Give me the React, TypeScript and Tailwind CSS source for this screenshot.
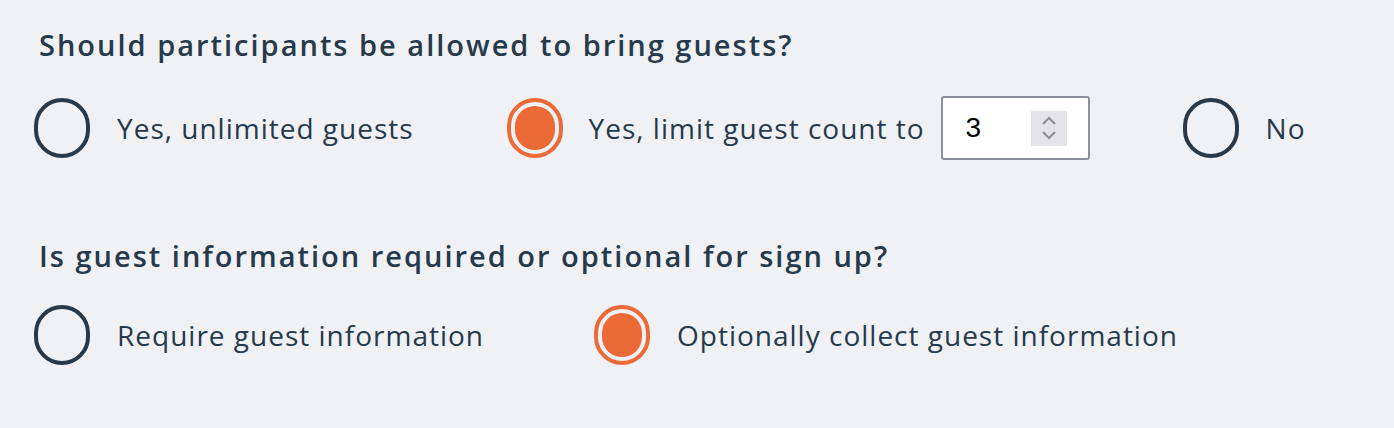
import { useState } from "react";

type Option = { value: string; label: string };

function Radio({ checked, onClick }: { checked: boolean; onClick: () => void }) {
  return (
    <button
      type="button"
      onClick={onClick}
      className={`flex h-[60px] w-[56px] shrink-0 items-center justify-center rounded-full border-4 ${
        checked ? "border-[#ec6a35]" : "border-[#263a4b]"
      }`}
    >
      {checked && <span className="block h-[44px] w-[40px] rounded-full bg-[#ec6a35]" />}
    </button>
  );
}

export default function App() {
  const [guests, setGuests] = useState("limit");
  const [count, setCount] = useState("3");
  const [info, setInfo] = useState("optional");

  const infoOptions: Option[] = [
    { value: "require", label: "Require guest information" },
    { value: "optional", label: "Optionally collect guest information" },
  ];

  return (
    <div
      className="min-h-[428px] w-full bg-[#f0f1f5] px-[34px] pt-[26px] text-[#263a4b]"
      style={{ fontFamily: '"Open Sans", "Noto Sans", sans-serif' }}
    >
      <h2 className="pl-[5px] text-[29px] font-semibold leading-[38px] tracking-[2px]">
        Should participants be allowed to bring guests?
      </h2>

      <div className="mt-[32px] flex items-center gap-[93px]">
        <label className="flex items-center gap-[27px]">
          <Radio checked={guests === "unlimited"} onClick={() => setGuests("unlimited")} />
          <span className="text-[28px] tracking-[1px]">Yes, unlimited guests</span>
        </label>

        <label className="flex items-center gap-[26px]">
          <Radio checked={guests === "limit"} onClick={() => setGuests("limit")} />
          <span className="text-[28px] tracking-[1px]">Yes, limit guest count to</span>
          <div className="-ml-[10px] flex h-[64px] w-[149px] items-center rounded-[3px] border-2 border-[#8e9099] bg-white pl-[23px] pr-[21px]">
            <input
              value={count}
              onChange={(e) => setCount(e.target.value)}
              className="w-full bg-transparent text-[28px] text-black outline-none"
              style={{ fontFamily: '"Liberation Sans", Arial, sans-serif' }}
            />
            <div className="flex h-[35px] w-[36px] shrink-0 flex-col items-center justify-center bg-[#e3e3e8]">
              <svg width="16" height="30" viewBox="0 0 16 30" fill="none" stroke="#8b8b93" strokeWidth="2">
                <path d="M2 11 L8 5 L14 11" />
                <path d="M2 19 L8 25 L14 19" />
              </svg>
            </div>
          </div>
        </label>

        <label className="flex items-center gap-[27px]">
          <Radio checked={guests === "no"} onClick={() => setGuests("no")} />
          <span className="text-[28px] tracking-[1px]">No</span>
        </label>
      </div>

      <h2 className="mt-[77px] pl-[5px] text-[29px] font-semibold leading-[38px] tracking-[2px]">
        Is guest information required or optional for sign up?
      </h2>

      <div className="mt-[30px] flex items-center gap-[110px]">
        {infoOptions.map((o) => (
          <label key={o.value} className="flex items-center gap-[27px]">
            <Radio checked={info === o.value} onClick={() => setInfo(o.value)} />
            <span className="text-[28px] tracking-[1px]">{o.label}</span>
          </label>
        ))}
      </div>
    </div>
  );
}
